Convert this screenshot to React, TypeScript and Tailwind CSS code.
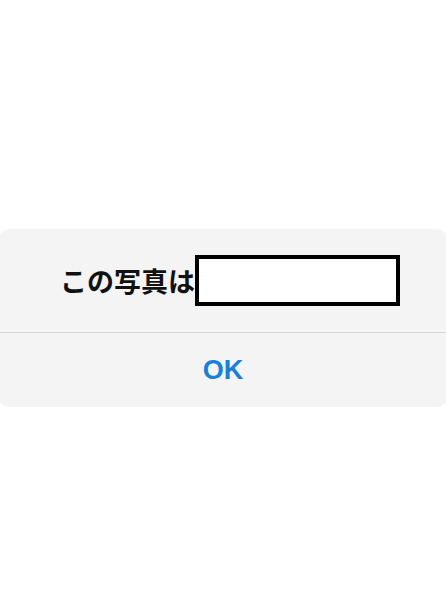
const App = () => {
  return (
    <div className="h-[600px] w-[446px] overflow-hidden bg-white pt-[229px] font-['Noto_Sans_CJK_JP','Noto_Sans',sans-serif]">
      <div className="mx-[-2px] flex flex-col rounded-[12px] bg-[#f4f4f4]">
        <div className="flex h-[103px] items-center pl-[62px]">
          <span className="text-[27px] font-bold leading-none text-[#111]">この写真は</span>
          <div className="h-[51px] w-[205px] border-[4px] border-black bg-white" />
        </div>
        <div className="h-px bg-[#d8d8d8]" />
        <button className="flex h-[74px] items-center justify-center font-['Liberation_Sans',sans-serif] text-[27px] font-bold text-[#1a7fd6]">
          OK
        </button>
      </div>
    </div>
  );
};

export default App;
